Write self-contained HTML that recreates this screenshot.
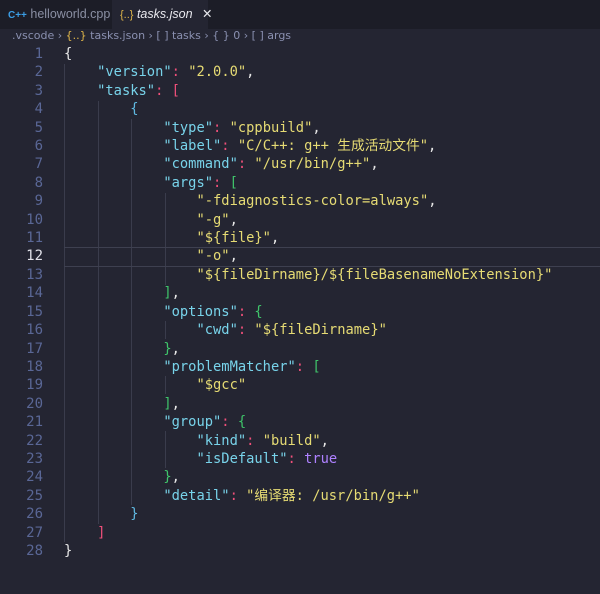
<!DOCTYPE html><html><head><meta charset="utf-8"><style>
body{margin:0;width:600px;height:594px;background:#242532;overflow:hidden;font-family:"DejaVu Sans Mono","Liberation Mono","Noto Sans CJK SC",monospace;}
.tabs{position:absolute;left:0;top:0;width:600px;height:29px;background:#1c1d27;}
.tab{position:absolute;top:0;height:29px;font-family:"Liberation Sans","DejaVu Sans",sans-serif;font-size:12.5px;line-height:29px;color:#8a8fa3;white-space:nowrap}
.t2{background:#242532;color:#e8e8ee;font-style:italic}
.bc{position:absolute;top:29px;left:12px;font-family:"DejaVu Sans",sans-serif;font-size:11px;line-height:14px;color:#8a90b0;white-space:pre}
.ln{position:absolute;left:0;width:43px;text-align:right;color:#5a6796;font-size:14px}
.code{position:absolute;left:64px;font-size:13.75px;white-space:pre;color:#e8e8e8}
.g{position:absolute;width:1px;background:#3a3c4c}
.k{color:#78d3ea}.s{color:#e6db74}.p{color:#f0507a}.w{color:#e8e8e8}.b{color:#5fb8e0}.gr{color:#3fc46a}.t{color:#ae81ff}.pk{color:#f0507a}
</style></head><body>
<div class="tabs">
<div class="tab" style="left:0;width:108px;padding-left:8px;box-sizing:border-box"><span style="color:#3b9ee6;font-weight:bold;font-size:10px">C++</span> helloworld.cpp</div>
<div class="tab t2" style="left:112px;width:96px;padding-left:8px;box-sizing:border-box"><span style="color:#e0b64a;font-style:normal;font-size:11px">{..}</span> tasks.json <span style="font-style:normal;margin-left:6px">✕</span></div>
</div>
<div class="bc">.vscode › <span style="color:#e0b64a">{..}</span> tasks.json › [ ] tasks › { } 0 › [ ] args</div>
<div class="g" style="left:64px;top:64px;height:478px"></div>
<div class="g" style="left:98px;top:101px;height:423px"></div>
<div class="g" style="left:131px;top:119px;height:386px"></div>
<div class="g" style="left:165px;top:193px;height:92px"></div>
<div class="g" style="left:165px;top:321px;height:18px"></div>
<div class="g" style="left:165px;top:376px;height:18px"></div>
<div class="g" style="left:165px;top:431px;height:37px"></div>
<div style="position:absolute;left:64px;top:247px;width:536px;height:18px;border-top:1px solid #3e4050;border-bottom:1px solid #3e4050"></div>
<div class="code" style="top:45px;line-height:18.4px"><span class="w">{</span>
    <span class="k">"version"</span><span class="p">:</span> <span class="s">"2.0.0"</span>,
    <span class="k">"tasks"</span><span class="p">:</span> <span class="pk">[</span>
        <span class="b">{</span>
            <span class="k">"type"</span><span class="p">:</span> <span class="s">"cppbuild"</span>,
            <span class="k">"label"</span><span class="p">:</span> <span class="s">"C/C++: g++ 生成活动文件"</span>,
            <span class="k">"command"</span><span class="p">:</span> <span class="s">"/usr/bin/g++"</span>,
            <span class="k">"args"</span><span class="p">:</span> <span class="gr">[</span>
                <span class="s">"-fdiagnostics-color=always"</span>,
                <span class="s">"-g"</span>,
                <span class="s">"${file}"</span>,
                <span class="s">"-o"</span>,
                <span class="s">"${fileDirname}/${fileBasenameNoExtension}"</span>
            <span class="gr">]</span>,
            <span class="k">"options"</span><span class="p">:</span> <span class="gr">{</span>
                <span class="k">"cwd"</span><span class="p">:</span> <span class="s">"${fileDirname}"</span>
            <span class="gr">}</span>,
            <span class="k">"problemMatcher"</span><span class="p">:</span> <span class="gr">[</span>
                <span class="s">"$gcc"</span>
            <span class="gr">]</span>,
            <span class="k">"group"</span><span class="p">:</span> <span class="gr">{</span>
                <span class="k">"kind"</span><span class="p">:</span> <span class="s">"build"</span>,
                <span class="k">"isDefault"</span><span class="p">:</span> <span class="t">true</span>
            <span class="gr">}</span>,
            <span class="k">"detail"</span><span class="p">:</span> <span class="s">"编译器: /usr/bin/g++"</span>
        <span class="b">}</span>
    <span class="pk">]</span>
<span class="w">}</span></div>
<div class="ln" style="top:45px;line-height:18.4px">1<br>2<br>3<br>4<br>5<br>6<br>7<br>8<br>9<br>10<br>11<br><span style="color:#e0e0e8">12</span><br>13<br>14<br>15<br>16<br>17<br>18<br>19<br>20<br>21<br>22<br>23<br>24<br>25<br>26<br>27<br>28</div>
</body></html>
